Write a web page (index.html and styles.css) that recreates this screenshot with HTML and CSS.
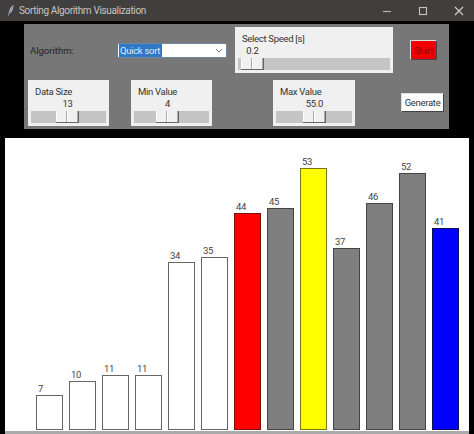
FILE: index.html
```html
<!DOCTYPE html>
<html lang="en">
<head>
    <meta charset="UTF-8">
    <meta name="viewport" content="width=device-width, initial-scale=1.0">
    <title>Sorting Algorithm Visualization</title>
    <link rel="stylesheet" href="styles.css">
</head>
<body>

    <!-- Window title bar -->
    <div class="titlebar">
        <svg class="app-icon" width="10" height="14" viewBox="0 0 10 14">
            <path d="M7.5 1 C5 2.5 3.2 5.5 2.6 9.5 L1.8 13 L3.2 10 C5.5 9 7.5 5 7.5 1 Z" fill="#c9ccd6"/>
            <path d="M7 2.5 L3 10" stroke="#4a5f9c" stroke-width="0.8" fill="none"/>
        </svg>
        <span class="title-text">Sorting Algorithm Visualization</span>
        <svg class="win-btn btn-min" width="10" height="10" viewBox="0 0 10 10">
            <path d="M1 5.5 H9" stroke="#b5b5b3" stroke-width="1.2"/>
        </svg>
        <svg class="win-btn btn-max" width="10" height="10" viewBox="0 0 10 10">
            <rect x="1.5" y="1.5" width="7" height="7" fill="none" stroke="#c4c4c2" stroke-width="1.1"/>
        </svg>
        <svg class="win-btn btn-close" width="10" height="10" viewBox="0 0 10 10">
            <path d="M1 1 L9 9 M9 1 L1 9" stroke="#d2d2d0" stroke-width="1.1"/>
        </svg>
    </div>

    <!-- Controls -->
    <div class="panel">
        <div class="panel-row row-top">
            <span class="algo-label">Algorithm:</span>
            <div class="combo">
                <span class="combo-text">Quick sort</span>
                <svg class="combo-arrow" width="8" height="5" viewBox="0 0 8 5">
                    <path d="M1 1 L4 4 L7 1" stroke="#777" stroke-width="1" fill="none"/>
                </svg>
            </div>
            <div class="scale scale-speed">
                <div class="scale-label">Select Speed [s]</div>
                <div class="scale-value" style="margin-left:3px">0.2</div>
                <div class="trough">
                    <div class="thumb" style="margin-left:3px"><i></i><i></i></div>
                </div>
            </div>
            <button class="btn btn-start">Start</button>
        </div>
        <div class="panel-row row-bottom">
            <div class="scale">
                <div class="scale-label">Data Size</div>
                <div class="scale-value" style="margin-left:25px">13</div>
                <div class="trough">
                    <div class="thumb" style="margin-left:25px"><i></i><i></i></div>
                </div>
            </div>
            <div class="scale scale-min">
                <div class="scale-label">Min Value</div>
                <div class="scale-value" style="margin-left:22px">4</div>
                <div class="trough">
                    <div class="thumb" style="margin-left:22px"><i></i><i></i></div>
                </div>
            </div>
            <div class="scale scale-max">
                <div class="scale-label">Max Value</div>
                <div class="scale-value" style="margin-left:27px">55.0</div>
                <div class="trough">
                    <div class="thumb" style="margin-left:27px"><i></i><i></i></div>
                </div>
            </div>
            <button class="btn btn-generate">Generate</button>
        </div>
    </div>

    <!-- Bars -->
    <div class="canvas">
        <div class="bar-col"><span class="bar-value">7</span><div class="bar" style="height:35px"></div></div>
        <div class="bar-col"><span class="bar-value">10</span><div class="bar" style="height:49px"></div></div>
        <div class="bar-col"><span class="bar-value">11</span><div class="bar" style="height:55px"></div></div>
        <div class="bar-col"><span class="bar-value">11</span><div class="bar" style="height:55px"></div></div>
        <div class="bar-col"><span class="bar-value">34</span><div class="bar" style="height:168px"></div></div>
        <div class="bar-col"><span class="bar-value">35</span><div class="bar" style="height:173px"></div></div>
        <div class="bar-col"><span class="bar-value">44</span><div class="bar bar-red" style="height:217px"></div></div>
        <div class="bar-col"><span class="bar-value">45</span><div class="bar bar-gray" style="height:222px"></div></div>
        <div class="bar-col"><span class="bar-value">53</span><div class="bar bar-yellow" style="height:262px"></div></div>
        <div class="bar-col"><span class="bar-value">37</span><div class="bar bar-gray" style="height:182px"></div></div>
        <div class="bar-col"><span class="bar-value">46</span><div class="bar bar-gray" style="height:227px"></div></div>
        <div class="bar-col"><span class="bar-value">52</span><div class="bar bar-gray" style="height:257px"></div></div>
        <div class="bar-col"><span class="bar-value">41</span><div class="bar bar-blue" style="height:202px"></div></div>
    </div>

</body>
</html>
```

FILE: styles.css
```css
html, body {
    height: 100%;
}
body {
    margin: 0;
    height: 434px;
    overflow: hidden;
    background-color: black;
    font-family: Roboto, "Noto Sans", sans-serif;
    font-size: 9.5px;
    letter-spacing: -0.3px;
    color: #333;
    display: flex;
    flex-direction: column;
}

/* title bar */
.titlebar {
    height: 21px;
    background-color: #403f3d;
    display: flex;
    align-items: center;
    padding-left: 6px;
    box-sizing: border-box;
}
.app-icon {
    margin-right: 3px;
}
.title-text {
    color: #c6c6c4;
    font-size: 10px;
    letter-spacing: -0.35px;
    flex: 1;
}
.win-btn {
    display: block;
}
.btn-min {
    margin-right: 26px;
}
.btn-max {
    margin-right: 26px;
}
.btn-close {
    margin-right: 10px;
}

/* control panel */
.panel {
    margin: 3px 25px 0 24px;
    height: 105px;
    background-color: #777;
    box-sizing: border-box;
    padding-top: 3px;
}
.panel-row {
    display: flex;
}
.row-top {
    height: 46px;
    align-items: center;
}
.row-bottom {
    margin-top: 7px;
    padding-left: 4px;
}
.algo-label {
    width: 88px;
    margin-left: 6px;
    color: #222;
    letter-spacing: 0;
}
.combo {
    width: 109px;
    height: 15px;
    background-color: white;
    display: flex;
    align-items: center;
    justify-content: space-between;
    box-sizing: border-box;
    padding: 0 3px 0 1px;
    border: 1px solid #6d87a0;
    border-left: none;
}
.combo-text {
    background-color: #2f78c8;
    color: #dfeaf7;
    padding: 0 1px;
    line-height: 13px;
    width: 43px;
    box-sizing: border-box;
    white-space: nowrap;
}
.scale {
    width: 81px;
    height: 46px;
    background-color: #f0f0f0;
    box-sizing: border-box;
    padding: 3px;
    display: flex;
    flex-direction: column;
    justify-content: flex-end;
}
.scale-label {
    margin-left: 4px;
    line-height: 13px;
}
.scale-value {
    width: 23px;
    text-align: center;
    line-height: 12px;
    margin-bottom: 1px;
}
.trough {
    height: 12px;
    background-color: #c4c4c4;
}
.thumb {
    width: 23px;
    height: 12px;
    display: flex;
    box-sizing: border-box;
    background-color: #f0f0f0;
    border-right: 1px solid #666;
    border-bottom: 1px solid #666;
}
.thumb i {
    flex: 1;
    border-left: 1px solid #fff;
    border-right: 1px solid #aaa;
}
.scale-speed {
    width: 158px;
    margin-left: 8px;
}
.scale-min {
    margin-left: 22px;
}
.scale-max {
    margin-left: 61px;
    width: 82px;
}
.btn {
    font-family: inherit;
    font-size: 9.5px;
    letter-spacing: inherit;
    padding: 0;
    box-sizing: border-box;
    border: 1px solid #ddd;
    border-right-color: #444;
    border-bottom-color: #444;
}
.btn-start {
    width: 27px;
    height: 20px;
    margin-left: 17px;
    background-color: #f00000;
    color: #900;
}
.btn-generate {
    width: 43px;
    height: 19px;
    margin-left: 46px;
    margin-top: 13px;
    background-color: white;
    color: #333;
}

/* bar area */
.canvas {
    margin: 9px 5px 0 5px;
    height: 293px;
    box-sizing: border-box;
    padding: 0 0 1px 31px;
    background-color: white;
    display: flex;
    align-items: flex-end;
    gap: 6px;
    box-shadow: 0 3px 0 #aaa;
}
.bar-col {
    width: 27px;
    display: flex;
    flex-direction: column;
}
.bar-value {
    line-height: 12px;
    margin-left: 2px;
    color: #444;
}
.bar {
    box-sizing: border-box;
    background-color: white;
    border: 1px solid #666;
}
.bar-gray {
    background-color: #7f7f7f;
    border-color: #444;
}
.bar-red {
    background-color: #f00;
    border-color: #7a1010;
}
.bar-yellow {
    background-color: #ff0;
    border-color: #77771a;
}
.bar-blue {
    background-color: #00f;
    border-color: #10105a;
}
```
